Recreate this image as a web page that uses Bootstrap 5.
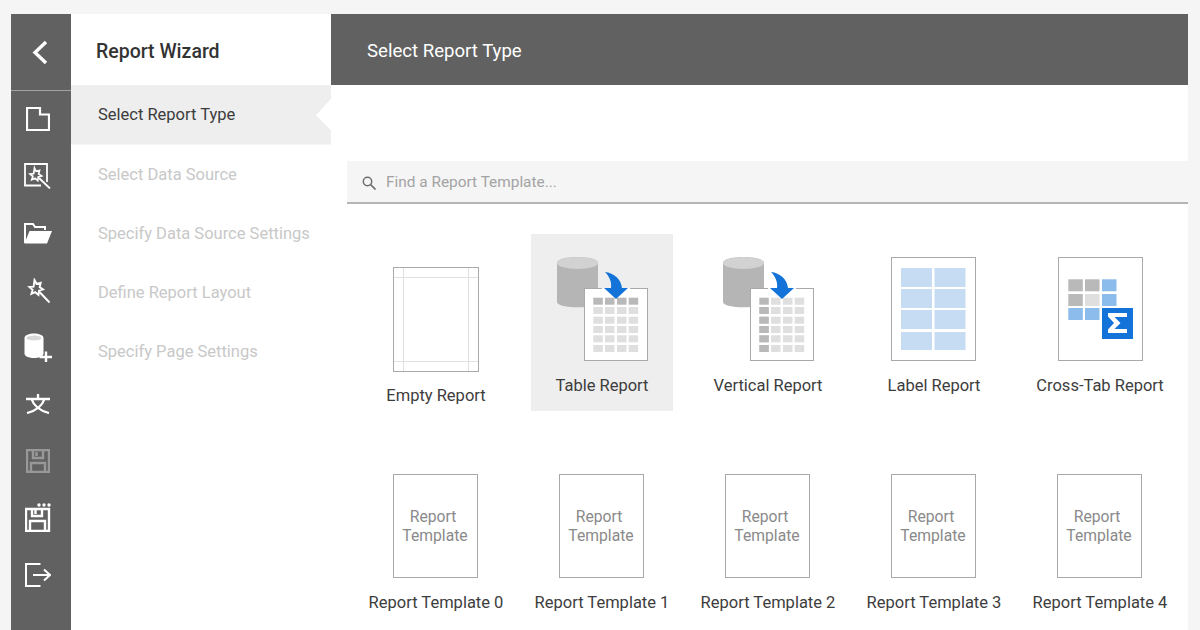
<!DOCTYPE html>
<html lang="en"><head><meta charset="utf-8"><title>Report Wizard</title>
<link href="https://cdn.jsdelivr.net/npm/bootstrap@5.3.0/dist/css/bootstrap.min.css" rel="stylesheet">
<style>
html,body{height:630px;overflow:hidden}
body{background:#f5f5f5;font-family:Roboto,"Liberation Sans",sans-serif;padding:14px 12px 0 11px;color:#333}
.shell{height:616px;background:#fff}
.rail{width:60px;background:#616161;flex:none}
.rail-back{height:77px;border-bottom:1px solid #a3a3a3}
.rail-btn{height:56.9px;width:100%;padding-right:7px}
.wiz{width:260px;flex:none}
.wiz-title{height:71px;padding-left:25px;font-size:19.5px;font-weight:500;color:#333;line-height:75px}
.wiz-step{height:59.25px;padding-left:27px;font-size:16.5px;color:#c8c8c8;line-height:59px}
.wiz-step-on{height:59.5px;background:#eee;color:#3b3b3b;clip-path:polygon(0 0,100% 0,100% 23%,245px 51%,100% 76%,100% 100%,0 100%)}
.main-area{min-width:0}
.head-bar{height:71px;background:#616161;color:#fff;font-size:18.6px;padding-left:36px;line-height:75px}
.find-bar{margin:76px 0 0 16px;height:43px;background:#f5f5f5;border-bottom:2px solid #b5b5b5;color:#a3a3a3;font-size:15.4px;padding:2px 0 0 15px;gap:10px}
.tpl-grid{margin:30px 0 0 34px;display:grid;grid-template-columns:repeat(5,142px);grid-auto-rows:177px;gap:40px 24px}
.tpl{padding-top:23px;font-size:16.5px;color:#3d3d3d;line-height:1}
.tpl-on{background:#eee}
.tpl-low{padding-top:33px}
.tpl-art{height:104px;margin-bottom:17px}
.tpl-low .tpl-art{height:105px;margin-bottom:16px}
.tpl svg{display:block}
.tpl-shift-l{margin-left:-1px}
.tpl-shift-r{margin-left:1px}
.tpl-page{width:85px;height:104px;border:1px solid #a9a9a9;background:#fff;color:#8a8a8a;font-size:15.7px;line-height:19px;padding:32px 1px 0 0;margin-left:-1px}
.tpl-name{white-space:nowrap}
</style></head>
<body>
<div class="shell d-flex">
 <div class="rail d-flex flex-column align-items-center">
  <div class="rail-back w-100 d-flex align-items-center justify-content-center">
   <svg width="60" height="76" viewBox="0 0 60 76"><path d="M35 28 L24 38.500 L35 49" fill="none" stroke="#fff" stroke-width="3.400"/></svg>
  </div>
  <div class="rail-btn d-flex align-items-center justify-content-center">
   <svg width="24" height="24" viewBox="0 0 24 24"><path d="M1 1H14V7.500H23V23H1Z" fill="none" stroke="#fff" stroke-width="2.200"/></svg>
  </div>
  <div class="rail-btn d-flex align-items-center justify-content-center">
   <svg width="27" height="26" viewBox="0 0 27 26"><path d="M17 22.500H1V1H23V19" fill="none" stroke="#fff" stroke-width="1.800"/><path d="M10.500 5l1.500 3.300 3.500-.8-.9 3.500 3 2-3.400 1-.4 3.600-2.800-2.300-3.200 1.500 1-3.400-2.700-2.300 3.500-.4z" fill="none" stroke="#fff" stroke-width="1.700"/><path d="M15 15L26 25.500" stroke="#fff" stroke-width="1.800"/></svg>
  </div>
  <div class="rail-btn d-flex align-items-center justify-content-center">
   <svg width="28" height="21" viewBox="0 0 28 21"><path d="M1 20V1H9L11 4H21V7" fill="none" stroke="#fff" stroke-width="2"/><path d="M5.500 8H28L23 20.500H0.500Z" fill="#fff"/></svg>
  </div>
  <div class="rail-btn d-flex align-items-center justify-content-center">
   <svg width="24" height="25" viewBox="0 0 24 25"><path d="M8.500 2l2 3.800 4.200-1-1 4.300 3.300 2.400-4 1.200-.5 4.200-3.300-2.700-3.800 1.700 1.200-4-3.200-2.800 4.200-.4z" fill="none" stroke="#fff" stroke-width="1.900"/><path d="M13.500 14L23.500 24.500" stroke="#fff" stroke-width="2"/></svg>
  </div>
  <div class="rail-btn d-flex align-items-center justify-content-center">
   <svg width="28" height="29" viewBox="0 0 28 29"><path d="M.5 5C.5 -1 19.500 -1 19.500 5V20.500C19.500 26.500 .5 26.500 .5 20.500Z" fill="#fff"/><ellipse cx="10" cy="5" rx="7.500" ry="2.500" fill="#d8d8d8"/><path d="M22 18.500V29M15.500 24H28" stroke="#fff" stroke-width="2.400"/></svg>
  </div>
  <div class="rail-btn d-flex align-items-center justify-content-center">
   <svg width="24" height="20" viewBox="0 0 24 20"><path d="M12 0V4.500M0 5H24M5.500 5C7.500 11 13 16.500 23 19M18.500 5C16.500 11 11 16.500 1 19" fill="none" stroke="#fff" stroke-width="2.300"/></svg>
  </div>
  <div class="rail-btn d-flex align-items-center justify-content-center">
   <svg width="24" height="24" viewBox="0 0 24 24" opacity=".35"><path d="M1 1H23V23H1Z" fill="none" stroke="#fff" stroke-width="2.400"/><path d="M7 1V9H17V1M5 23V14H19V23M10.500 3V7" fill="none" stroke="#fff" stroke-width="2.400"/></svg>
  </div>
  <div class="rail-btn d-flex align-items-center justify-content-center">
   <svg width="26" height="29" viewBox="0 0 26 29"><path d="M1 6H24V28H1Z" fill="none" stroke="#fff" stroke-width="2.400"/><path d="M7 6V13H17V6M5 28V18H20V28M10.500 7V11" fill="none" stroke="#fff" stroke-width="2.400"/><circle cx="14" cy="2" r="1.700" fill="#fff"/><circle cx="19" cy="2" r="1.700" fill="#fff"/><circle cx="24" cy="2" r="1.700" fill="#fff"/></svg>
  </div>
  <div class="rail-btn d-flex align-items-center justify-content-center">
   <svg width="26" height="24" viewBox="0 0 26 24"><path d="M15.500 1H1V23H15.500" fill="none" stroke="#fff" stroke-width="2"/><path d="M8 12H25M19 6.500L25 12L19 17.500" fill="none" stroke="#fff" stroke-width="2"/></svg>
  </div>
 </div>
 <div class="wiz">
  <div class="wiz-title">Report Wizard</div>
  <div class="wiz-step wiz-step-on">Select Report Type</div>
  <div class="wiz-step">Select Data Source</div>
  <div class="wiz-step">Specify Data Source Settings</div>
  <div class="wiz-step">Define Report Layout</div>
  <div class="wiz-step">Specify Page Settings</div>
 </div>
 <div class="main-area flex-grow-1">
  <div class="head-bar">Select Report Type</div>
  <div class="find-bar d-flex align-items-center">
   <svg width="14" height="14" viewBox="0 0 14 14"><circle cx="5.500" cy="5.500" r="4.200" fill="none" stroke="#6e6e6e" stroke-width="1.500"/><path d="M8.500 8.500L13.500 13.500" stroke="#6e6e6e" stroke-width="1.700"/></svg>
   <span>Find a Report Template...</span>
  </div>
  <div class="tpl-grid">
   <div class="tpl tpl-low d-flex flex-column align-items-center">
    <div class="tpl-art"><svg width="86" height="105" viewBox="0 0 86 105"><rect x=".5" y=".5" width="85" height="104" fill="#fff" stroke="#aaa"/><path d="M10.500 1V104M75.500 1V104M1 10.500H85M1 94.500H85" stroke="#e0e0e0" fill="none"/></svg></div>
    <div class="tpl-name">Empty Report</div>
   </div>
   <div class="tpl tpl-on d-flex flex-column align-items-center">
    <div class="tpl-art"><svg width="92" height="104" viewBox="0 0 92 104"><use href="#db-art"/><rect x="28.500" y="31.500" width="63" height="72" fill="#fff" stroke="#aaa"/><g fill="#dfdfdf"><use href="#cells"/></g><g fill="#b9b9b9"><rect x="37.300" y="40.700" width="9.500" height="7"/><rect x="49" y="40.700" width="9.500" height="7"/><rect x="61" y="40.700" width="9.500" height="7"/><rect x="72.700" y="40.700" width="9.500" height="7"/></g><use href="#arrow-art"/></svg></div>
    <div class="tpl-name">Table Report</div>
   </div>
   <div class="tpl d-flex flex-column align-items-center">
    <div class="tpl-art"><svg width="92" height="104" viewBox="0 0 92 104"><defs>
      <g id="db-art"><path d="M1 6C1 -2 42 -2 42 6V45C42 52 1 52 1 45Z" fill="#b5b5b5"/><ellipse cx="21.500" cy="6" rx="20.500" ry="6" fill="#d2d2d2"/></g>
      <g id="cells"><rect x="37.300" y="50" width="9.500" height="7"/><rect x="49" y="50" width="9.500" height="7"/><rect x="61" y="50" width="9.500" height="7"/><rect x="72.700" y="50" width="9.500" height="7"/><rect x="37.300" y="59.700" width="9.500" height="7"/><rect x="49" y="59.700" width="9.500" height="7"/><rect x="61" y="59.700" width="9.500" height="7"/><rect x="72.700" y="59.700" width="9.500" height="7"/><rect x="37.300" y="69" width="9.500" height="7"/><rect x="49" y="69" width="9.500" height="7"/><rect x="61" y="69" width="9.500" height="7"/><rect x="72.700" y="69" width="9.500" height="7"/><rect x="37.300" y="78.300" width="9.500" height="7"/><rect x="49" y="78.300" width="9.500" height="7"/><rect x="61" y="78.300" width="9.500" height="7"/><rect x="72.700" y="78.300" width="9.500" height="7"/><rect x="37.300" y="88" width="9.500" height="7"/><rect x="49" y="88" width="9.500" height="7"/><rect x="61" y="88" width="9.500" height="7"/><rect x="72.700" y="88" width="9.500" height="7"/></g>
      <g id="arrow-art"><path d="M46 31H74V32H46Z" fill="#fff"/><path d="M49 15C58 16 65 22 66 31H72L60 42L48 31H55C56 25 53 19 49 15Z" fill="#1473d8"/></g>
     </defs><use href="#db-art"/><rect x="28.500" y="31.500" width="63" height="72" fill="#fff" stroke="#aaa"/><g fill="#dfdfdf"><rect x="49" y="40.700" width="9.500" height="7"/><rect x="61" y="40.700" width="9.500" height="7"/><rect x="72.700" y="40.700" width="9.500" height="7"/><use href="#cells"/></g><g fill="#b9b9b9"><rect x="37.300" y="40.700" width="9.500" height="7"/><rect x="37.300" y="50" width="9.500" height="7"/><rect x="37.300" y="59.700" width="9.500" height="7"/><rect x="37.300" y="69" width="9.500" height="7"/><rect x="37.300" y="78.300" width="9.500" height="7"/><rect x="37.300" y="88" width="9.500" height="7"/></g><use href="#arrow-art"/></svg></div>
    <div class="tpl-name">Vertical Report</div>
   </div>
   <div class="tpl d-flex flex-column align-items-center">
    <div class="tpl-art tpl-shift-l"><svg width="85" height="104" viewBox="0 0 85 104"><rect x=".5" y=".5" width="84" height="103" fill="#fff" stroke="#aaa"/><g fill="#c5dcf3"><rect x="10" y="11" width="31" height="19"/><rect x="43.500" y="11" width="31" height="19"/><rect x="10" y="32" width="31" height="19"/><rect x="43.500" y="32" width="31" height="19"/><rect x="10" y="53" width="31" height="19"/><rect x="43.500" y="53" width="31" height="19"/><rect x="10" y="75" width="31" height="18"/><rect x="43.500" y="75" width="31" height="18"/></g></svg></div>
    <div class="tpl-name">Label Report</div>
   </div>
   <div class="tpl d-flex flex-column align-items-center">
    <div class="tpl-art tpl-shift-r"><svg width="85" height="104" viewBox="0 0 85 104"><rect x=".5" y=".5" width="84" height="103" fill="#fff" stroke="#aaa"/><g fill="#b9b9b9"><rect x="10.300" y="22.300" width="14.500" height="12"/><rect x="27" y="22.300" width="14.500" height="12"/><rect x="10.300" y="37" width="14.500" height="12"/></g><rect x="27" y="37" width="14.500" height="12" fill="#dfdfdf"/><g fill="#8bbcec"><rect x="44" y="22.300" width="14.500" height="12"/><rect x="44" y="37" width="14.500" height="12"/><rect x="10.300" y="51" width="14.500" height="12"/><rect x="27" y="51" width="14.500" height="12"/></g><rect x="44" y="51" width="31" height="31" fill="#1473d8"/><path d="M50 56H69V60H56.500L62.500 66L56.500 72H69V76H50V72.500L56 66L50 59.500Z" fill="#fff"/></svg></div>
    <div class="tpl-name">Cross-Tab Report</div>
   </div>
   <div class="tpl d-flex flex-column align-items-center"><div class="tpl-art tpl-page text-center">Report&nbsp;<br>Template</div><div class="tpl-name">Report Template 0</div></div>
   <div class="tpl d-flex flex-column align-items-center"><div class="tpl-art tpl-page text-center">Report&nbsp;<br>Template</div><div class="tpl-name">Report Template 1</div></div>
   <div class="tpl d-flex flex-column align-items-center"><div class="tpl-art tpl-page text-center">Report&nbsp;<br>Template</div><div class="tpl-name">Report Template 2</div></div>
   <div class="tpl d-flex flex-column align-items-center"><div class="tpl-art tpl-page text-center">Report&nbsp;<br>Template</div><div class="tpl-name">Report Template 3</div></div>
   <div class="tpl d-flex flex-column align-items-center"><div class="tpl-art tpl-page text-center">Report&nbsp;<br>Template</div><div class="tpl-name">Report Template 4</div></div>
  </div>
 </div>
</div>
<script src="https://cdn.jsdelivr.net/npm/bootstrap@5.3.0/dist/js/bootstrap.bundle.min.js"></script>
</body></html>
